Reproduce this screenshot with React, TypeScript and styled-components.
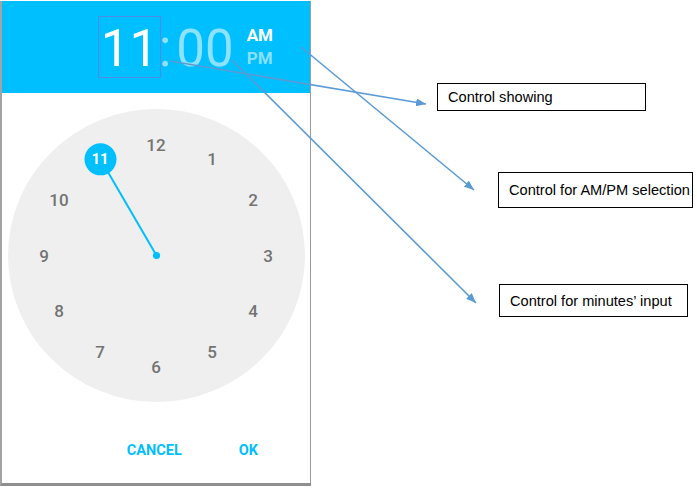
import React from "react";
import styled, { createGlobalStyle } from "styled-components";

const ACCENT = "#00bfff";
const CALLOUT = "#5b9bd5";

const GlobalStyle = createGlobalStyle`
  html, body {
    margin: 0;
    padding: 0;
    background: #fff;
  }
  body {
    font-family: Roboto, "Noto Sans", sans-serif;
  }
`;

const Page = styled.div`
  position: relative;
  width: 697px;
  height: 488px;
  display: flex;
  align-items: flex-start;
  overflow: hidden;
`;

/* ---------- time picker dialog ---------- */

const Dialog = styled.section`
  box-sizing: border-box;
  flex: none;
  margin-top: 1px;
  width: 311px;
  height: 485px;
  display: flex;
  flex-direction: column;
  background: #fff;
  border-left: 2px solid #a3a3a3;
  border-right: 1px solid #9a9a9a;
  border-bottom: 3px solid #8f8f8f;
`;

const Header = styled.header`
  box-sizing: border-box;
  flex: none;
  height: 92px;
  display: flex;
  align-items: flex-start;
  padding: 15px 0 0 96px;
  background: ${ACCENT};
  color: #fff;
`;

const HourBox = styled.div`
  box-sizing: border-box;
  width: 63px;
  height: 62px;
  padding-top: 2px;
  display: flex;
  align-items: center;
  justify-content: center;
  border: 1px solid #4d8be6;
  font-size: 51px;
  line-height: 1;
  font-weight: 400;
`;

const Minutes = styled.div`
  display: flex;
  margin-top: 6.5px;
  font-size: 51px;
  line-height: 1;
  font-weight: 400;
  color: rgba(255, 255, 255, 0.55);
`;

const Colon = styled.span`
  margin-left: -2px;
`;

const MinuteDigits = styled.span`
  margin-left: 5px;
`;

const Meridiem = styled.div`
  display: flex;
  flex-direction: column;
  margin: 8px 0 0 13px;
`;

const MeridiemOption = styled.span<{ $active?: boolean }>`
  font-size: 17px;
  line-height: 23px;
  font-weight: 700;
  color: ${(p) => (p.$active ? "#fff" : "rgba(255, 255, 255, 0.55)")};
`;

const Body = styled.div`
  flex: 1;
  display: flex;
  flex-direction: column;
  align-items: flex-start;
`;

const FACE_W = 297;
const FACE_H = 293;
const CX = FACE_W / 2;
const CY = FACE_H / 2;
const RX = 112;
const RY = 111;

const Face = styled.div`
  position: relative;
  flex: none;
  margin: 16px 0 0 5.5px;
  width: ${FACE_W}px;
  height: ${FACE_H}px;
  border-radius: 50%;
  background: #efefef;
`;

const Hand = styled.svg`
  position: absolute;
  left: 0;
  top: 0;
`;

const Numeral = styled.span<{ $selected?: boolean }>`
  position: absolute;
  transform: translate(-50%, -50%);
  line-height: 1;
  white-space: nowrap;
  font-size: ${(p) => (p.$selected ? 15 : 17)}px;
  font-weight: ${(p) => (p.$selected ? 700 : 500)};
  color: ${(p) => (p.$selected ? "#fff" : "#737373")};
`;

const Actions = styled.div`
  align-self: stretch;
  display: flex;
  justify-content: flex-end;
  gap: 57px;
  margin-top: 38.5px;
  padding-right: 52px;
`;

const ActionButton = styled.button`
  border: 0;
  padding: 0;
  background: none;
  font-family: Roboto, "Noto Sans", sans-serif;
  font-size: 14.5px;
  line-height: 20px;
  font-weight: 700;
  color: ${ACCENT};
  cursor: pointer;
`;

/* ---------- annotation boxes ---------- */

const Notes = styled.div`
  display: flex;
  flex-direction: column;
  align-items: flex-start;
  font-family: "Liberation Sans", Arial, sans-serif;
`;

const Note = styled.div<{ $x: number; $gap: number; $w: number; $h: number }>`
  box-sizing: border-box;
  margin-left: ${(p) => p.$x}px;
  margin-top: ${(p) => p.$gap}px;
  width: ${(p) => p.$w}px;
  height: ${(p) => p.$h}px;
  display: flex;
  align-items: center;
  padding-left: 10px;
  border: 1px solid #000;
  background: #fff;
  font-size: 14.6px;
  color: #000;
  white-space: nowrap;
`;

const Callouts = styled.svg`
  position: absolute;
  left: 0;
  top: 0;
  pointer-events: none;
`;

const HOURS = [12, 1, 2, 3, 4, 5, 6, 7, 8, 9, 10, 11];
const SELECTED = 11;

function dialPoint(hour: number) {
  const a = ((hour % 12) * 30 * Math.PI) / 180;
  return { x: CX + RX * Math.sin(a), y: CY - RY * Math.cos(a) };
}

function ClockFace() {
  const sel = dialPoint(SELECTED);
  return (
    <Face>
      <Hand width={FACE_W} height={FACE_H}>
        <line x1={CX} y1={CY} x2={sel.x} y2={sel.y} stroke={ACCENT} strokeWidth={2} />
        <circle cx={CX} cy={CY} r={3.6} fill={ACCENT} />
        <circle cx={sel.x} cy={sel.y} r={16} fill={ACCENT} />
      </Hand>
      {HOURS.map((h) => {
        const p = dialPoint(h);
        return (
          <Numeral key={h} $selected={h === SELECTED} style={{ left: p.x, top: p.y }}>
            {h}
          </Numeral>
        );
      })}
    </Face>
  );
}

const ARROWS = [
  { x1: 170, y1: 61, x2: 426, y2: 104 },
  { x1: 301, y1: 47, x2: 474, y2: 190 },
  { x1: 232, y1: 60, x2: 476, y2: 303 },
];

export default function App() {
  return (
    <>
      <GlobalStyle />
      <Page>
        <Dialog>
          <Header>
            <HourBox>11</HourBox>
            <Minutes>
              <Colon>:</Colon>
              <MinuteDigits>00</MinuteDigits>
            </Minutes>
            <Meridiem>
              <MeridiemOption $active>AM</MeridiemOption>
              <MeridiemOption>PM</MeridiemOption>
            </Meridiem>
          </Header>
          <Body>
            <ClockFace />
            <Actions>
              <ActionButton>CANCEL</ActionButton>
              <ActionButton>OK</ActionButton>
            </Actions>
          </Body>
        </Dialog>

        <Notes>
          <Note $x={126} $gap={83} $w={209} $h={28}>
            Control showing
          </Note>
          <Note $x={187} $gap={61} $w={195} $h={36}>
            Control for AM/PM selection
          </Note>
          <Note $x={188} $gap={76} $w={189} $h={33}>
            Control for minutes’ input
          </Note>
        </Notes>

        <Callouts width={697} height={488}>
          <defs>
            <marker
              id="arrow-tip"
              markerUnits="userSpaceOnUse"
              markerWidth={10}
              markerHeight={8}
              refX={10}
              refY={4}
              orient="auto"
            >
              <path d="M0,0 L10,4 L0,8 Z" fill={CALLOUT} />
            </marker>
          </defs>
          {ARROWS.map((a, i) => (
            <line
              key={i}
              x1={a.x1}
              y1={a.y1}
              x2={a.x2}
              y2={a.y2}
              stroke={CALLOUT}
              strokeWidth={1.6}
              markerEnd="url(#arrow-tip)"
            />
          ))}
        </Callouts>
      </Page>
    </>
  );
}
